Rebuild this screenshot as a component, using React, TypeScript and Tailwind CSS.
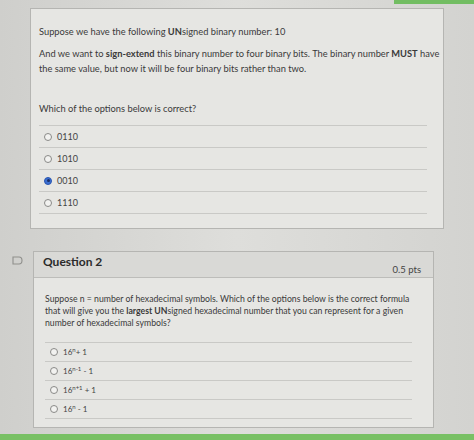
import React from "react";

const font = { fontFamily: "Lato, 'Noto Sans', sans-serif" };

function Radio({ checked }: { checked?: boolean }) {
  return checked ? (
    <span className="w-[8px] h-[8px] rounded-full bg-[#3b6fd1] border border-[#2a56b0] flex items-center justify-center shrink-0">
      <span className="w-[3px] h-[3px] rounded-full bg-[#1c2f66]" />
    </span>
  ) : (
    <span className="w-[8px] h-[8px] rounded-full border border-[#8a8a88] bg-[#f2f2f0] shrink-0" />
  );
}

function Option({ label, checked, h }: { label: React.ReactNode; checked?: boolean; h: string }) {
  return (
    <div className={`flex items-center gap-[5px] border-t border-[#c9c9c6] pl-[5px] ${h}`}>
      <Radio checked={checked} />
      <span className="text-[#444]">{label}</span>
    </div>
  );
}

export default function App() {
  return (
    <div
      style={font}
      className="w-[474px] h-[440px] overflow-hidden relative bg-gradient-to-r from-[#cfcfcc] via-[#dededb] to-[#d3d3d0] flex flex-col"
    >
      {/* green strip top right */}
      <div className="absolute top-0 right-0 w-[80px] h-[4px] bg-[#72bd62]" />

      {/* Question 1 card */}
      <div className="ml-[30px] mt-[8px] w-[414px] h-[221px] border border-[#b5b5b2] bg-[#e6e6e3] pl-[8px] pr-[2px] pt-[15px] text-[9.3px] leading-[15px] text-[#3a3a3a]">
        <p>
          Suppose we have the following <b>UN</b>signed binary number: 10
        </p>
        <p className="mt-[7px]">
          And we want to <b>sign-extend</b> this binary number to four binary bits. The binary number <b>MUST</b> have
          the same value, but now it will be four binary bits rather than two.
        </p>
        <p className="mt-[25px]">Which of the options below is correct?</p>
        <div className="mt-[9px] text-[9px] border-b border-[#c9c9c6] mr-[14px]">
          <Option label="0110" h="h-[22px]" />
          <Option label="1010" h="h-[22px]" />
          <Option label="0010" checked h="h-[22px]" />
          <Option label="1110" h="h-[22px]" />
        </div>
      </div>

      {/* Question 2 */}
      <div className="flex mt-[22px]">
        <div className="w-[33px] pt-[5px] pl-[12px]">
          <svg width="11" height="9" viewBox="0 0 11 9" fill="none">
            <path d="M1 1 H7 Q10 1 10 4.5 Q10 8 7 8 H1 Z" stroke="#8f8f8c" strokeWidth="1.1" />
          </svg>
        </div>
        <div className="w-[401px] h-[177px] border border-[#b5b5b2] bg-[#e6e6e3] flex flex-col">
          <div className="h-[26px] bg-[#d9d9d6] border-b border-[#bdbdba] flex items-start justify-between pl-[9px] pr-[12px] pt-[1px]">
            <span className="text-[12px] font-bold text-[#2b2b2b]">Question 2</span>
            <span className="text-[9.5px] text-[#444] mt-[10px]">0.5 pts</span>
          </div>
          <div className="px-[11px] pt-[15px] text-[8.7px] leading-[12px] text-[#3a3a3a]">
            <p>
              Suppose n = number of hexadecimal symbols. Which of the options below is the correct formula that will
              give you the <b>largest UN</b>signed hexadecimal number that you can represent for a given number of
              hexadecimal symbols?
            </p>
            <div className="mt-[13px] text-[8px] border-b border-[#c9c9c6] mr-[10px]">
              <Option label={<>16<sup className="text-[6px]">n</sup>+ 1</>} h="h-[19px]" />
              <Option label={<>16<sup className="text-[6px]">n-1</sup> - 1</>} h="h-[19px]" />
              <Option label={<>16<sup className="text-[6px]">n+1</sup> + 1</>} h="h-[19px]" />
              <Option label={<>16<sup className="text-[6px]">n</sup> - 1</>} h="h-[19px]" />
            </div>
          </div>
        </div>
      </div>

      {/* green bar bottom */}
      <div className="absolute bottom-0 left-0 w-full h-[6px] bg-[#78c064]" />
    </div>
  );
}
